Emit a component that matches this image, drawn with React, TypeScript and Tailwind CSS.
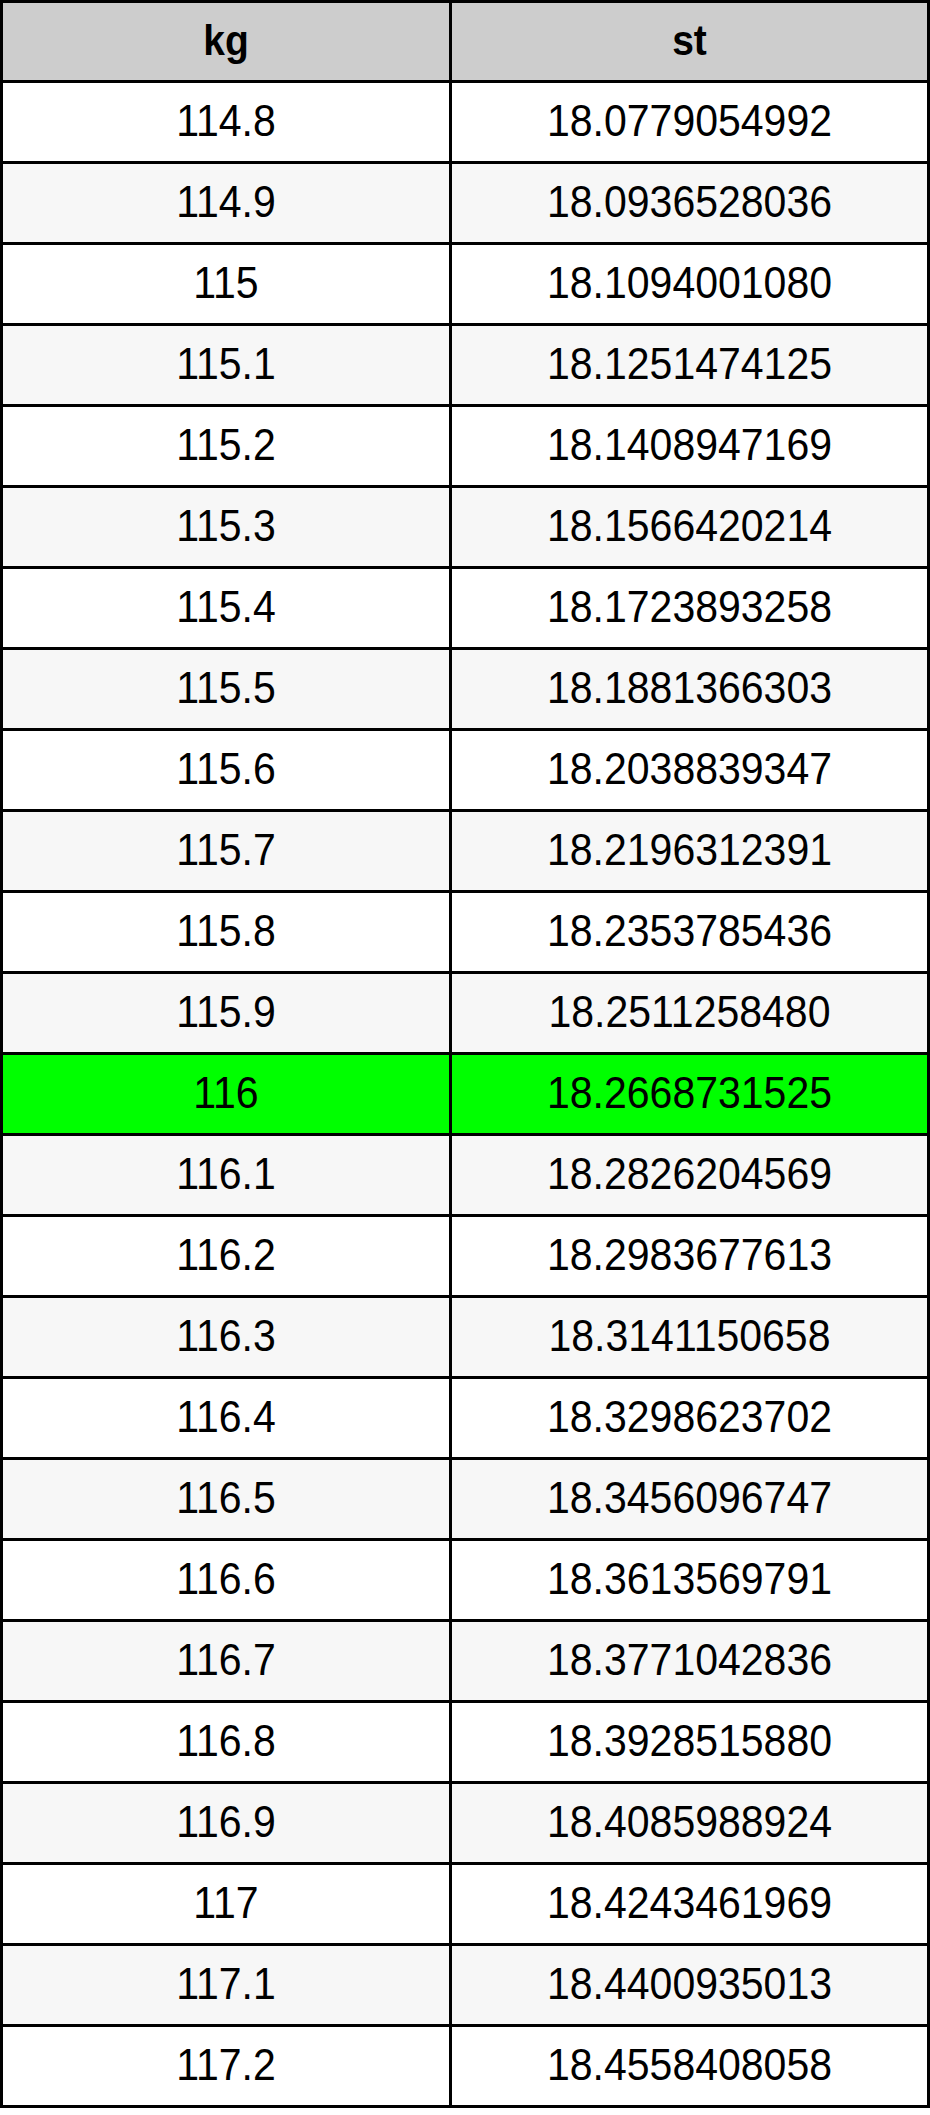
const rows: [string, string][] = [
  ['114.8', '18.0779054992'],
  ['114.9', '18.0936528036'],
  ['115', '18.1094001080'],
  ['115.1', '18.1251474125'],
  ['115.2', '18.1408947169'],
  ['115.3', '18.1566420214'],
  ['115.4', '18.1723893258'],
  ['115.5', '18.1881366303'],
  ['115.6', '18.2038839347'],
  ['115.7', '18.2196312391'],
  ['115.8', '18.2353785436'],
  ['115.9', '18.2511258480'],
  ['116', '18.2668731525'],
  ['116.1', '18.2826204569'],
  ['116.2', '18.2983677613'],
  ['116.3', '18.3141150658'],
  ['116.4', '18.3298623702'],
  ['116.5', '18.3456096747'],
  ['116.6', '18.3613569791'],
  ['116.7', '18.3771042836'],
  ['116.8', '18.3928515880'],
  ['116.9', '18.4085988924'],
  ['117', '18.4243461969'],
  ['117.1', '18.4400935013'],
  ['117.2', '18.4558408058'],
];

export default function App() {
  return (
    <div className="w-[930px] bg-white font-['Liberation_Sans',Arial,sans-serif] text-black">
      <div className="border-[3px] border-black">
        {/* header */}
        <div className="flex h-[77px] bg-[#cdcdcd] text-[39px] font-bold">
          <div className="flex w-[449px] items-center justify-center border-r-[3px] border-black">
            <span className="inline-block scale-y-110">kg</span>
          </div>
          <div className="flex flex-1 items-center justify-center">
            <span className="inline-block scale-y-110">st</span>
          </div>
        </div>

        {rows.map(([kg, st], i) => {
          const bg = kg === '116' ? 'bg-[#00ff00]' : i % 2 === 1 ? 'bg-[#f7f7f7]' : 'bg-white';
          return (
            <div key={kg} className={`flex h-[81px] border-t-[3px] border-black text-[41px] ${bg}`}>
              <div className="flex w-[449px] items-center justify-center border-r-[3px] border-black">
                <span className="inline-block scale-y-110">{kg}</span>
              </div>
              <div className="flex flex-1 items-center justify-center">
                <span className="inline-block scale-y-110">{st}</span>
              </div>
            </div>
          );
        })}
      </div>
    </div>
  );
}
